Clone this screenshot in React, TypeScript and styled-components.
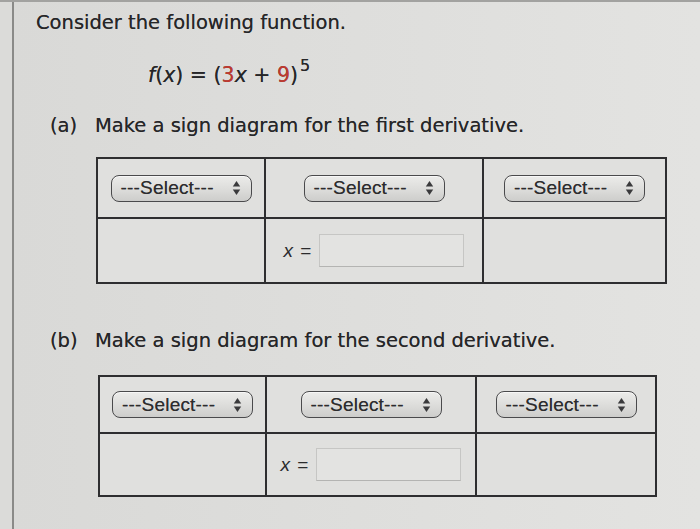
import React from 'react'
import styled, { createGlobalStyle } from 'styled-components'

const GlobalStyle = createGlobalStyle`
  html, body {
    margin: 0;
    padding: 0;
    background: #dbdbd9;
  }
  body {
    width: 700px;
    height: 529px;
    overflow: hidden;
  }
`

interface TableSpec {
  left: number
  cols: number[]
  rows: number[]
  top: number
}

const tables: { label: string, text: string, spec: TableSpec }[] = [
  {
    label: '(a)',
    text: 'Make a sign diagram for the first derivative.',
    spec: { left: 60, cols: [168, 218, 181], rows: [60, 63], top: 19 },
  },
  {
    label: '(b)',
    text: 'Make a sign diagram for the second derivative.',
    spec: { left: 62, cols: [167, 210, 178], rows: [57, 61], top: 22 },
  },
]

const SelectArrows: React.FC = () => (
  <svg width="9" height="16" viewBox="0 0 9 16">
    <path d="M4.5 1 L8.2 6.5 L0.8 6.5 Z" fill="#3a3a3c" />
    <path d="M4.5 15 L8.2 9.5 L0.8 9.5 Z" fill="#3a3a3c" />
  </svg>
)

const SignTable: React.FC<{ spec: TableSpec }> = ({ spec }) => (
  <StyledTable
    $left={spec.left}
    $top={spec.top}
    $cols={spec.cols}
    $rows={spec.rows}
  >
    {spec.cols.map((_, i) => (
      <Cell key={'s' + i} $lastCol={i === spec.cols.length - 1}>
        <FakeSelect>
          <span>---Select---</span>
          <SelectArrows />
        </FakeSelect>
      </Cell>
    ))}
    <Cell $bottom />
    <Cell $bottom>
      <XEquals>
        <i>x</i> =
      </XEquals>
      <AnswerBox />
    </Cell>
    <Cell $bottom $lastCol />
  </StyledTable>
)

const App: React.FC = () => {
  return (
    <>
      <GlobalStyle />
      <StyledFrame>
        <StyledPage>
          <StyledHeading>Consider the following function.</StyledHeading>
          <StyledFormula>
            <i>f</i>(<i>x</i>) = (<Red>3</Red><i>x</i> + <Red>9</Red>)<sup>5</sup>
          </StyledFormula>
          {tables.map((t, i) => (
            <React.Fragment key={i}>
              <StyledPart $first={i === 0}>
                <PartLabel>{t.label}</PartLabel>
                {t.text}
              </StyledPart>
              <SignTable spec={t.spec} />
            </React.Fragment>
          ))}
        </StyledPage>
      </StyledFrame>
    </>
  )
}

const StyledFrame = styled.div`
  border-top: 2px solid #a2a2a0;
  height: 529px;
  box-sizing: border-box;
`

const StyledPage = styled.div`
  margin-left: 12px;
  height: 100%;
  border-left: 2px solid #8a8a88;
  padding: 9px 0 0 22px;
  box-sizing: border-box;
  font-family: "DejaVu Sans", Verdana, sans-serif;
  color: #262628;
  text-shadow: 0 0 0.5px rgba(30, 30, 32, 0.7);
  background: linear-gradient(90deg, #d9d9d7 0%, #dfdfdd 60%, #e3e3e1 100%);
`

const StyledHeading = styled.div`
  font-size: 19.5px;
  line-height: 24px;
`

const StyledFormula = styled.div`
  margin: 28px 0 0 112px;
  font-size: 20.5px;
  line-height: 24px;

  sup {
    font-size: 16px;
    position: relative;
    top: -3px;
    line-height: 0;
    margin-left: 2px;
  }
`

const Red = styled.span`
  color: #c0392f;
`

const StyledPart = styled.div<{ $first?: boolean }>`
  margin: ${props => (props.$first ? 27 : 45)}px 0 0 14px;
  font-size: 19.5px;
  line-height: 24px;
`

const PartLabel = styled.span`
  display: inline-block;
  width: 45px;
`

const StyledTable = styled.div<{ $left: number, $top: number, $cols: number[], $rows: number[] }>`
  display: grid;
  grid-template-columns: ${props => props.$cols.map(c => c + 'px').join(' ')};
  grid-template-rows: ${props => props.$rows.map(r => r + 'px').join(' ')};
  width: fit-content;
  margin: ${props => props.$top}px 0 0 ${props => props.$left}px;
  border: 2px solid #2e2e30;
  background: #e0e0de;
  text-shadow: none;
`

const Cell = styled.div<{ $bottom?: boolean, $lastCol?: boolean }>`
  display: flex;
  align-items: center;
  justify-content: center;
  gap: 8px;
  border-right: ${props => (props.$lastCol ? 'none' : '2px solid #2e2e30')};
  border-bottom: ${props => (props.$bottom ? 'none' : '2px solid #2e2e30')};
`

const FakeSelect = styled.div`
  display: flex;
  align-items: center;
  justify-content: space-between;
  width: 141px;
  height: 27px;
  box-sizing: border-box;
  padding: 0 10px 0 9px;
  border: 1.5px solid #4a4a4c;
  border-radius: 8px;
  background: linear-gradient(180deg, #ececea 0%, #dcdcda 55%, #cdcdcb 100%);
  font-family: "Liberation Sans", Arial, sans-serif;
  font-size: 19px;
  letter-spacing: 0.2px;
  color: #2c2c2e;
  text-shadow: 0 0 0.4px rgba(30, 30, 32, 0.6);
  box-shadow: inset 0 1px 0 rgba(255, 255, 255, 0.6);
`

const XEquals = styled.span`
  font-family: "Liberation Sans", Arial, sans-serif;
  font-size: 19px;
  color: #2b2b2d;
  word-spacing: 2px;
`

const AnswerBox = styled.div`
  width: 145px;
  height: 33px;
  box-sizing: border-box;
  border: 1px solid #c6c6c4;
  border-bottom-color: #b4b4b2;
  background: #e3e3e1;
`

export default App
